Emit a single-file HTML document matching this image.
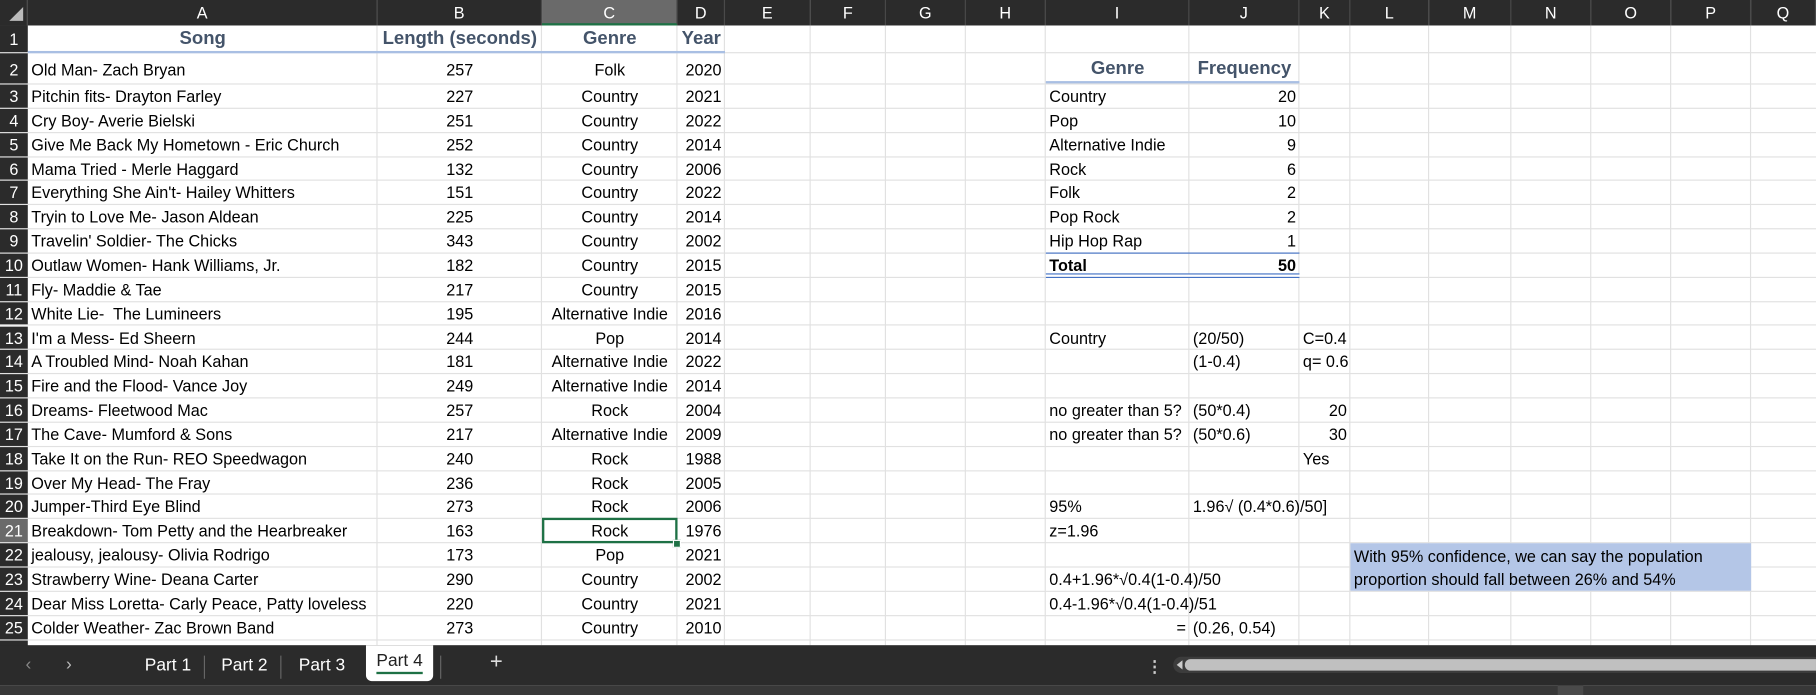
<!DOCTYPE html>
<html><head><meta charset="utf-8">
<style>
html,body{margin:0;padding:0;width:1816px;height:695px;overflow:hidden;background:#fff}
#w{position:absolute;left:0;top:0;width:1568px;height:600px;transform:scale(1.15816,1.15833);transform-origin:0 0;font-family:"Liberation Sans",Arial,sans-serif;font-size:14px;color:#000}
.v{position:absolute;top:22px;height:535px;width:1px;background:#e1e1e1}
.hd{position:absolute;top:0;height:22px;background:#2b2b2b;color:#fff;text-align:center;line-height:22px;font-size:14px;border-right:1px solid #4a4a4a;box-sizing:border-box}
.r{position:absolute;left:0;width:1568px;height:20.85px;top:calc(73px + var(--i)*20.85px);border-bottom:1px solid #e1e1e1;box-sizing:border-box}
.c{position:absolute;top:0;height:100%;line-height:20px;white-space:nowrap;padding:0 3px;box-sizing:border-box}
.n{position:absolute;left:0;top:0;width:24px;height:100%;background:#2b2b2b;color:#fff;text-align:center;line-height:20px;font-size:14px}
.A{left:24px;width:302px}.B{left:326px;width:142px}.C{left:468px;width:117px}.D{left:585px;width:41px}
.I{left:903px;width:124px}.J{left:1027px;width:95px}.K{left:1122px;width:44px}.L{left:1166px;width:68px}
.ct{text-align:center}.rt{text-align:right}
.bh{font-weight:bold;color:#44546a;font-size:16px}
</style></head><body><div id="w">
<!-- column headers -->
<div class="hd" style="left:0;width:24px"><svg width="24" height="22"><polygon points="8,18 20,18 20,6" fill="#bbb"/></svg></div>
<div class="hd" style="left:24px;width:302px">A</div>
<div class="hd" style="left:326px;width:142px">B</div>
<div class="hd" style="left:468px;width:117px;background:#6a6a6a;border-bottom:2px solid #1e7145">C</div>
<div class="hd" style="left:585px;width:41px">D</div>
<div class="hd" style="left:626px;width:74px">E</div>
<div class="hd" style="left:700px;width:65px">F</div>
<div class="hd" style="left:765px;width:69px">G</div>
<div class="hd" style="left:834px;width:69px">H</div>
<div class="hd" style="left:903px;width:124px">I</div>
<div class="hd" style="left:1027px;width:95px">J</div>
<div class="hd" style="left:1122px;width:44px">K</div>
<div class="hd" style="left:1166px;width:68px">L</div>
<div class="hd" style="left:1234px;width:71px">M</div>
<div class="hd" style="left:1305px;width:69px">N</div>
<div class="hd" style="left:1374px;width:69px">O</div>
<div class="hd" style="left:1443px;width:69px">P</div>
<div class="hd" style="left:1512px;width:56px">Q</div>
<!-- vertical grid -->
<div class="v" style="left:325px"></div><div class="v" style="left:467px"></div><div class="v" style="left:584px"></div><div class="v" style="left:625px"></div><div class="v" style="left:699px"></div><div class="v" style="left:764px"></div><div class="v" style="left:833px"></div><div class="v" style="left:902px"></div><div class="v" style="left:1026px"></div><div class="v" style="left:1121px"></div><div class="v" style="left:1165px"></div><div class="v" style="left:1233px"></div><div class="v" style="left:1304px"></div><div class="v" style="left:1373px"></div><div class="v" style="left:1442px"></div><div class="v" style="left:1511px"></div>
<!-- row 1 -->
<div style="position:absolute;left:0;top:22px;width:1568px;height:24px;border-bottom:1px solid #e1e1e1;box-sizing:border-box">
<div class="n" style="line-height:24px">1</div>
<span class="c A ct bh" style="line-height:23px">Song</span><span class="c B ct bh" style="line-height:23px">Length (seconds)</span><span class="c C ct bh" style="line-height:23px">Genre</span><span class="c D ct bh" style="line-height:23px;padding:0">Year</span>
</div>
<div style="position:absolute;left:24px;top:44px;width:602px;height:2px;background:#a9bfe3"></div>
<!-- row 2 -->
<div style="position:absolute;left:0;top:46px;width:1568px;height:27px;border-bottom:1px solid #e1e1e1;box-sizing:border-box">
<div class="n" style="line-height:28px">2</div>
<span class="c A" style="line-height:28px">Old Man- Zach Bryan</span><span class="c B ct" style="line-height:28px">257</span><span class="c C ct" style="line-height:28px">Folk</span><span class="c D rt" style="line-height:28px">2020</span>
<span class="c I ct bh" style="line-height:28px">Genre</span><span class="c J ct bh" style="line-height:28px">Frequency</span>
</div>
<div style="position:absolute;left:903px;top:70px;width:219px;height:2px;background:#a9bfe3"></div>

<div class="r" style="--i:0"><div class="n">3</div><span class="c A">Pitchin fits- Drayton Farley</span><span class="c B ct">227</span><span class="c C ct">Country</span><span class="c D rt">2021</span><span class="c I">Country</span><span class="c J rt">20</span></div>
<div class="r" style="--i:1"><div class="n">4</div><span class="c A">Cry Boy- Averie Bielski</span><span class="c B ct">251</span><span class="c C ct">Country</span><span class="c D rt">2022</span><span class="c I">Pop</span><span class="c J rt">10</span></div>
<div class="r" style="--i:2"><div class="n">5</div><span class="c A">Give Me Back My Hometown - Eric Church</span><span class="c B ct">252</span><span class="c C ct">Country</span><span class="c D rt">2014</span><span class="c I">Alternative Indie</span><span class="c J rt">9</span></div>
<div class="r" style="--i:3"><div class="n">6</div><span class="c A">Mama Tried - Merle Haggard</span><span class="c B ct">132</span><span class="c C ct">Country</span><span class="c D rt">2006</span><span class="c I">Rock</span><span class="c J rt">6</span></div>
<div class="r" style="--i:4"><div class="n">7</div><span class="c A">Everything She Ain't- Hailey Whitters</span><span class="c B ct">151</span><span class="c C ct">Country</span><span class="c D rt">2022</span><span class="c I">Folk</span><span class="c J rt">2</span></div>
<div class="r" style="--i:5"><div class="n">8</div><span class="c A">Tryin to Love Me- Jason Aldean</span><span class="c B ct">225</span><span class="c C ct">Country</span><span class="c D rt">2014</span><span class="c I">Pop Rock</span><span class="c J rt">2</span></div>
<div class="r" style="--i:6"><div class="n">9</div><span class="c A">Travelin' Soldier- The Chicks</span><span class="c B ct">343</span><span class="c C ct">Country</span><span class="c D rt">2002</span><span class="c I">Hip Hop Rap</span><span class="c J rt">1</span></div>
<div class="r" style="--i:7"><div class="n">10</div><span class="c A">Outlaw Women- Hank Williams, Jr.</span><span class="c B ct">182</span><span class="c C ct">Country</span><span class="c D rt">2015</span><span class="c I" style="font-weight:bold">Total</span><span class="c J rt" style="font-weight:bold">50</span></div>
<div style="position:absolute;left:903px;top:218px;width:219px;height:1px;background:#4472c4"></div>
<div style="position:absolute;left:903px;top:236px;width:219px;height:4px;border-top:1px solid #4472c4;border-bottom:1px solid #4472c4;box-sizing:border-box;background:#fff"></div>
<div class="r" style="--i:8"><div class="n">11</div><span class="c A">Fly- Maddie &amp; Tae</span><span class="c B ct">217</span><span class="c C ct">Country</span><span class="c D rt">2015</span></div>
<div class="r" style="--i:9"><div class="n">12</div><span class="c A">White Lie-&nbsp; The Lumineers</span><span class="c B ct">195</span><span class="c C ct">Alternative Indie</span><span class="c D rt">2016</span></div>
<div class="r" style="--i:10"><div class="n">13</div><span class="c A">I'm a Mess- Ed Sheern</span><span class="c B ct">244</span><span class="c C ct">Pop</span><span class="c D rt">2014</span><span class="c I">Country</span><span class="c J">(20/50)</span><span class="c K">C=0.4</span></div>
<div class="r" style="--i:11"><div class="n">14</div><span class="c A">A Troubled Mind- Noah Kahan</span><span class="c B ct">181</span><span class="c C ct">Alternative Indie</span><span class="c D rt">2022</span><span class="c J">(1-0.4)</span><span class="c K">q= 0.6</span></div>
<div class="r" style="--i:12"><div class="n">15</div><span class="c A">Fire and the Flood- Vance Joy</span><span class="c B ct">249</span><span class="c C ct">Alternative Indie</span><span class="c D rt">2014</span></div>
<div class="r" style="--i:13"><div class="n">16</div><span class="c A">Dreams- Fleetwood Mac</span><span class="c B ct">257</span><span class="c C ct">Rock</span><span class="c D rt">2004</span><span class="c I">no greater than 5?</span><span class="c J">(50*0.4)</span><span class="c K rt">20</span></div>
<div class="r" style="--i:14"><div class="n">17</div><span class="c A">The Cave- Mumford &amp; Sons</span><span class="c B ct">217</span><span class="c C ct">Alternative Indie</span><span class="c D rt">2009</span><span class="c I">no greater than 5?</span><span class="c J">(50*0.6)</span><span class="c K rt">30</span></div>
<div class="r" style="--i:15"><div class="n">18</div><span class="c A">Take It on the Run- REO Speedwagon</span><span class="c B ct">240</span><span class="c C ct">Rock</span><span class="c D rt">1988</span><span class="c K">Yes</span></div>
<div class="r" style="--i:16"><div class="n">19</div><span class="c A">Over My Head- The Fray</span><span class="c B ct">236</span><span class="c C ct">Rock</span><span class="c D rt">2005</span></div>
<div class="r" style="--i:17"><div class="n">20</div><span class="c A">Jumper-Third Eye Blind</span><span class="c B ct">273</span><span class="c C ct">Rock</span><span class="c D rt">2006</span><span class="c I">95%</span><span class="c J">1.96√ (0.4*0.6)/50]</span></div>
<div class="r" style="--i:18"><div class="n" style="background:#6a6a6a">21</div><span class="c A">Breakdown- Tom Petty and the Hearbreaker</span><span class="c B ct">163</span><span class="c C ct" style="border:2px solid #1e7145;top:-1px;height:22px;line-height:18px">Rock</span><span class="c D rt">1976</span><span class="c I">z=1.96</span></div>
<div style="position:absolute;left:581px;top:466px;width:5px;height:5px;background:#1e7145;border:1px solid #fff"></div>
<div class="r" style="--i:19"><div class="n">22</div><span class="c A">jealousy, jealousy- Olivia Rodrigo</span><span class="c B ct">173</span><span class="c C ct">Pop</span><span class="c D rt">2021</span></div>
<div class="r" style="--i:20"><div class="n">23</div><span class="c A">Strawberry Wine- Deana Carter</span><span class="c B ct">290</span><span class="c C ct">Country</span><span class="c D rt">2002</span><span class="c I">0.4+1.96*√0.4(1-0.4)/50</span></div>
<div class="r" style="--i:21"><div class="n">24</div><span class="c A">Dear Miss Loretta- Carly Peace, Patty loveless</span><span class="c B ct">220</span><span class="c C ct">Country</span><span class="c D rt">2021</span><span class="c I">0.4-1.96*√0.4(1-0.4)/51</span></div>
<div class="r" style="--i:22"><div class="n">25</div><span class="c A">Colder Weather- Zac Brown Band</span><span class="c B ct">273</span><span class="c C ct">Country</span><span class="c D rt">2010</span><span class="c I rt">=</span><span class="c J">(0.26, 0.54)</span></div>
<div class="r" style="--i:23"><div class="n">26</div></div>
<!-- blue note -->
<div style="position:absolute;left:1166px;top:469px;width:346px;height:41px;background:#b4c6e7;padding:1px 3px;box-sizing:border-box;line-height:20px;font-size:14px">With 95% confidence, we can say the population<br>proportion should fall between 26% and 54%</div>
<!-- tab bar -->
<div style="position:absolute;left:0;top:557px;width:1568px;height:35px;background:#2b2b2b"></div>
<div style="position:absolute;left:0;top:592px;width:1568px;height:8px;background:#383838"></div>
<div style="position:absolute;left:22px;top:565px;color:#888;font-size:15px">&#8249;</div>
<div style="position:absolute;left:57px;top:565px;color:#bbb;font-size:15px">&#8250;</div>
<div style="position:absolute;left:125px;top:566px;color:#fff;font-size:15px">Part 1</div>
<div style="position:absolute;left:176px;top:566px;width:1px;height:20px;background:#666"></div>
<div style="position:absolute;left:191px;top:566px;color:#fff;font-size:15px">Part 2</div>
<div style="position:absolute;left:242px;top:566px;width:1px;height:20px;background:#666"></div>
<div style="position:absolute;left:258px;top:566px;color:#fff;font-size:15px">Part 3</div>
<div style="position:absolute;left:316px;top:557px;width:58px;height:31px;background:#fff;border-radius:0 0 5px 5px"></div>
<div style="position:absolute;left:325px;top:562px;color:#222;font-size:15px">Part 4</div>
<div style="position:absolute;left:325px;top:580px;width:40px;height:2px;background:#1e7145"></div>
<div style="position:absolute;left:380px;top:566px;width:1px;height:20px;background:#666"></div>
<div style="position:absolute;left:423px;top:561px;color:#ddd;font-size:19px">+</div>
<div style="position:absolute;left:990px;top:567px;color:#ccc;font-size:14px;font-weight:bold">&#8942;</div>
<div style="position:absolute;left:1013px;top:567px;width:560px;height:14px;background:#3c3c3c;border-radius:7px"></div>
<div style="position:absolute;left:1016px;top:570px;width:0;height:0;border-top:4px solid transparent;border-bottom:4px solid transparent;border-right:5px solid #ccc"></div>
<div style="position:absolute;left:1023px;top:569px;width:545px;height:10px;background:#c0c0c0;border-radius:5px 0 0 5px"></div>
<div style="position:absolute;left:1345px;top:592px;width:22px;height:8px;background:#4a4a4a"></div>
</div></body></html>
